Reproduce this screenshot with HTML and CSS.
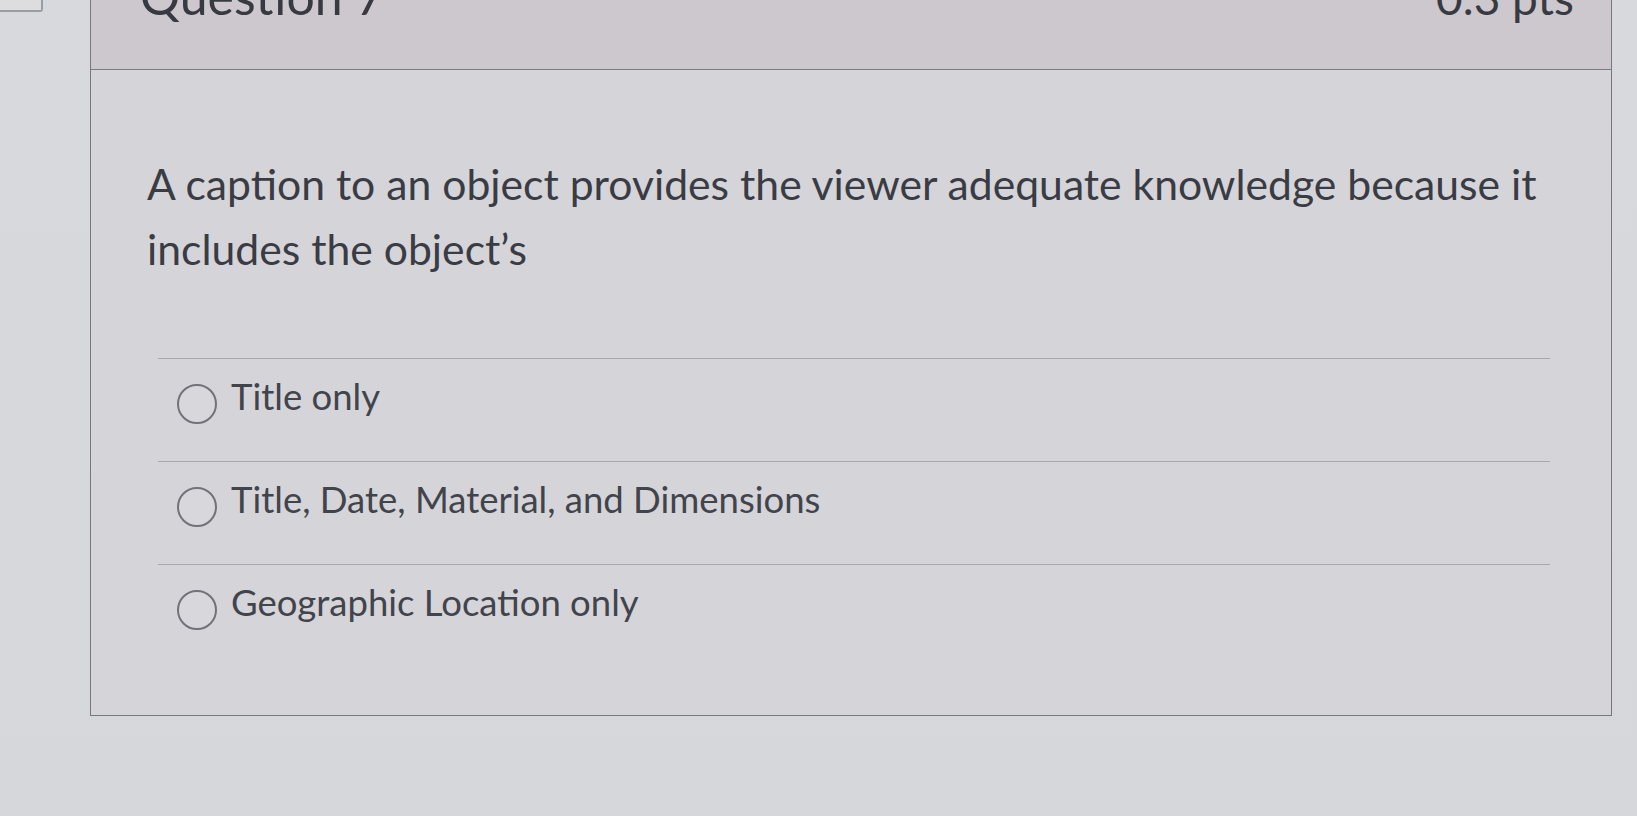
FILE: index.html
```html
<!DOCTYPE html>
<html lang="en">
<head>
<meta charset="utf-8">
<title>Question 7</title>
<link rel="stylesheet" href="styles.css">
</head>
<body>
<div class="page">
  <div class="gutter">
    <div class="flag"></div>
  </div>
  <div class="card">
    <div class="card-header">
      <span class="q-name">Question 7</span>
      <span class="q-pts">0.3 pts</span>
    </div>
    <div class="card-body">
      <p class="question">A caption to an object provides the viewer adequate knowledge because it includes the object’s</p>
      <div class="answers">
        <label class="answer"><span class="radio"></span><span class="answer-text">Title only</span></label>
        <label class="answer"><span class="radio"></span><span class="answer-text">Title, Date, Material, and Dimensions</span></label>
        <label class="answer"><span class="radio"></span><span class="answer-text">Geographic Location only</span></label>
      </div>
    </div>
  </div>
</div>
</body>
</html>
```

FILE: styles.css
```css
html, body {
  margin: 0;
  padding: 0;
}

body {
  width: 1637px;
  height: 816px;
  overflow: hidden;
  background: linear-gradient(180deg, #d8d9dd 0%, #d5d7db 100%);
  font-family: Lato, "Open Sans", "Liberation Sans", sans-serif;
  color: #3b3d45;
}

.page {
  display: flex;
  align-items: flex-start;
}

.gutter {
  width: 90px;
  flex: none;
}

.flag {
  width: 43px;
  height: 12px;
  box-sizing: border-box;
  background: #dddde0;
  border-right: 2px solid #9c9da2;
  border-bottom: 2px solid #9c9da2;
  border-bottom-right-radius: 3px;
}

.card {
  width: 1522px;
  flex: none;
  margin-top: -40px;
  box-sizing: border-box;
  border: 1px solid #77787e;
  background: #d5d4d9;
}

.card-header {
  display: flex;
  justify-content: space-between;
  align-items: baseline;
  padding: 6px 37px 42px 49px;
  background: #ccc8cd;
  border-bottom: 1px solid #7b7b81;
  line-height: 58px;
  color: #383a42;
}

.q-name {
  font-size: 50px;
}

.q-pts {
  font-size: 46px;
}

.card-body {
  padding: 81px 56px 48px 56px;
}

.question {
  margin: 0;
  font-size: 42.7px;
  line-height: 65px;
  color: #3a3c44;
}

.answers {
  margin: 77px 5px 0 11px;
}

.answer {
  display: flex;
  align-items: flex-start;
  box-sizing: border-box;
  height: 103px;
  padding: 14px 0 0 19px;
  border-top: 1px solid #a8a8ae;
}

.radio {
  flex: none;
  width: 40px;
  height: 40px;
  box-sizing: border-box;
  margin-top: 11px;
  margin-right: 14px;
  border: 2.5px solid #727379;
  border-radius: 50%;
  background: #d8d7dc;
}

.answer-text {
  font-size: 36.5px;
  line-height: 46px;
  color: #42444b;
}
```
